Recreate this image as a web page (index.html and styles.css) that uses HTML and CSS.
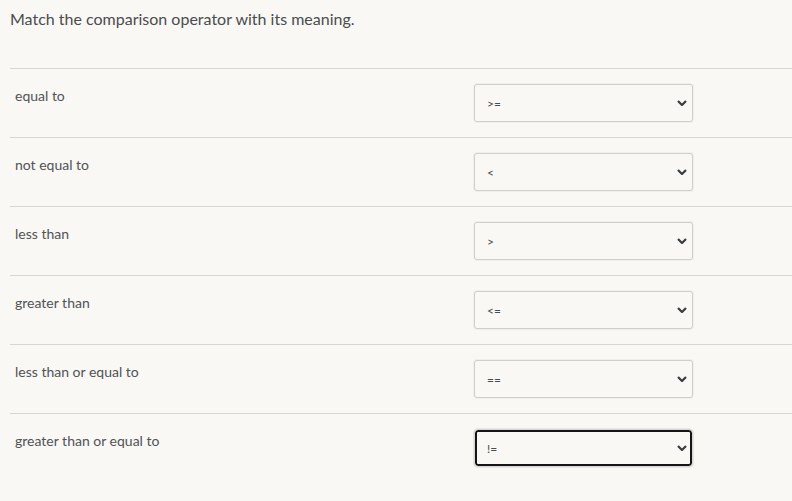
FILE: index.html
```html
<!DOCTYPE html>
<html>
<head>
<meta charset="utf-8">
<link rel="stylesheet" href="styles.css">
</head>
<body>
<div class="page">
  <p class="question">Match the comparison operator with its meaning.</p>
  <div class="rows">
    <div class="row">
      <div class="label">equal to</div>
      <div class="sel"><select><option>&gt;=</option></select><svg class="chev" viewBox="0 0 10 6" width="10" height="6"><path d="M1 1 L5 5 L9 1" fill="none" stroke="#3a3d40" stroke-width="2.2"/></svg></div>
    </div>
    <div class="row">
      <div class="label">not equal to</div>
      <div class="sel"><select><option>&lt;</option></select><svg class="chev" viewBox="0 0 10 6" width="10" height="6"><path d="M1 1 L5 5 L9 1" fill="none" stroke="#3a3d40" stroke-width="2.2"/></svg></div>
    </div>
    <div class="row">
      <div class="label">less than</div>
      <div class="sel"><select><option>&gt;</option></select><svg class="chev" viewBox="0 0 10 6" width="10" height="6"><path d="M1 1 L5 5 L9 1" fill="none" stroke="#3a3d40" stroke-width="2.2"/></svg></div>
    </div>
    <div class="row">
      <div class="label">greater than</div>
      <div class="sel"><select><option>&lt;=</option></select><svg class="chev" viewBox="0 0 10 6" width="10" height="6"><path d="M1 1 L5 5 L9 1" fill="none" stroke="#3a3d40" stroke-width="2.2"/></svg></div>
    </div>
    <div class="row">
      <div class="label">less than or equal to</div>
      <div class="sel"><select><option>==</option></select><svg class="chev" viewBox="0 0 10 6" width="10" height="6"><path d="M1 1 L5 5 L9 1" fill="none" stroke="#3a3d40" stroke-width="2.2"/></svg></div>
    </div>
    <div class="row">
      <div class="label">greater than or equal to</div>
      <div class="sel focused"><select><option>!=</option></select><svg class="chev" viewBox="0 0 10 6" width="10" height="6"><path d="M1 1 L5 5 L9 1" fill="none" stroke="#3a3d40" stroke-width="2.2"/></svg></div>
    </div>
  </div>
</div>
</body>
</html>
```

FILE: styles.css
```css
html, body {
  margin: 0;
  padding: 0;
  background: #f9f8f5;
}
body {
  font-family: Lato, "Noto Sans", sans-serif;
  color: #494c4e;
}
.page {
  padding: 0 0 0 10px;
}
.question {
  margin: 0;
  padding-top: 9px;
  height: 68px;
  box-sizing: border-box;
  font-size: 16px;
  line-height: 20px;
  color: #4a4c4e;
}
.row {
  display: grid;
  grid-template-columns: 464px 219px;
  border-top: 1px solid #d6d6d4;
  height: 68px;
}
.label {
  padding: 18px 0 0 5px;
  font-size: 14px;
  line-height: 17px;
  color: #505356;
}
.sel {
  position: relative;
  margin-top: 15px;
  height: 38px;
}
.sel select {
  -webkit-appearance: none;
  appearance: none;
  width: 100%;
  height: 38px;
  margin: 0;
  border: 1px solid #cfcfcd;
  border-radius: 3px;
  background: #f9f8f5;
  box-shadow: 0 0 0 1px #f0efeb;
  font-family: Lato, "Noto Sans", sans-serif;
  font-size: 12px;
  color: #494c4e;
  padding: 0 0 0 12px;
  outline: none;
}
.sel.focused select {
  box-shadow: inset 0 0 0 2px #151515, 0 0 0 1px #e6e5e1;
  border-color: #d8d7d4;
  border-radius: 4px;
}
.chev {
  position: absolute;
  right: 6px;
  top: 16px;
  pointer-events: none;
}
```
